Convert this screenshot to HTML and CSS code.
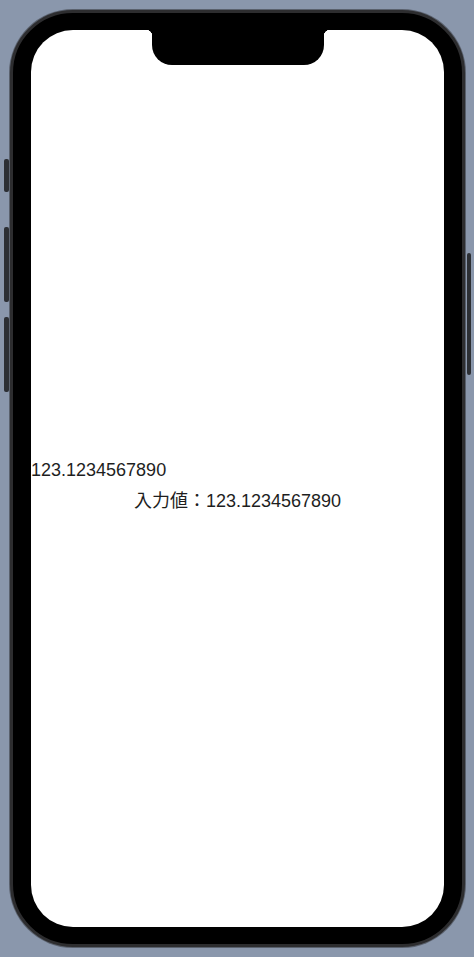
FILE: index.html
```html
<!DOCTYPE html>
<html lang="ja">
<head>
<meta charset="utf-8">
<title>入力値</title>
<link rel="stylesheet" href="styles.css">
</head>
<body>
<div class="phone">
  <span class="btn btn-silent"></span>
  <span class="btn btn-vol-up"></span>
  <span class="btn btn-vol-down"></span>
  <span class="btn btn-power"></span>
  <div class="screen">
    <div class="notch"></div>
    <div class="content">
      <div class="field">123.1234567890</div>
      <div class="label">入力値：123.1234567890</div>
    </div>
  </div>
</div>
</body>
</html>
```
FILE: styles.css
```css
html, body {
  margin: 0;
  padding: 0;
}
body {
  width: 474px;
  height: 957px;
  background: #8a97ac;
  overflow: hidden;
  padding-top: 10px;
  padding-left: 10px;
  box-sizing: border-box;
}
.phone {
  position: relative;
  width: 455px;
  height: 937px;
  box-sizing: border-box;
  border-radius: 63px;
  background: #000;
  border: 3px solid #2d2d2f;
  padding: 17px 18px 17px 18px;
  box-shadow: 0 0 0 1px rgba(70, 74, 82, 0.7);
}
.btn {
  position: absolute;
  width: 5px;
  background: #2c2f34;
  border-radius: 2px;
}
.btn-silent { left: -9px; top: 146px; height: 33px; }
.btn-vol-up { left: -9px; top: 214px; height: 75px; }
.btn-vol-down { left: -9px; top: 304px; height: 75px; }
.btn-power { right: -9px; top: 240px; height: 122px; width: 4px; }
.screen {
  position: relative;
  height: 100%;
  background: #fff;
  border-radius: 42px;
  overflow: hidden;
  display: flex;
  flex-direction: column;
  justify-content: center;
  padding: 50px 0 36px;
  box-sizing: border-box;
}
.notch {
  position: absolute;
  top: 0;
  left: 121px;
  width: 172px;
  height: 35px;
  background: #000;
  border-radius: 0 0 20px 20px;
}
.notch::before,
.notch::after {
  content: "";
  position: absolute;
  top: 0;
  width: 6px;
  height: 6px;
}
.notch::before {
  left: -6px;
  background: radial-gradient(circle at 0 100%, transparent 6px, #000 6.5px);
}
.notch::after {
  right: -6px;
  background: radial-gradient(circle at 100% 100%, transparent 6px, #000 6.5px);
}
.content {
  display: flex;
  flex-direction: column;
  gap: 9px;
  font-family: "Liberation Sans", "Noto Sans CJK JP", sans-serif;
  font-size: 18px;
  line-height: 22px;
  color: #1e1e1e;
}
.field {
  text-align: left;
}
.label {
  text-align: center;
  word-spacing: 0;
}
.label .colon {
  margin-right: 2px;
}
```
